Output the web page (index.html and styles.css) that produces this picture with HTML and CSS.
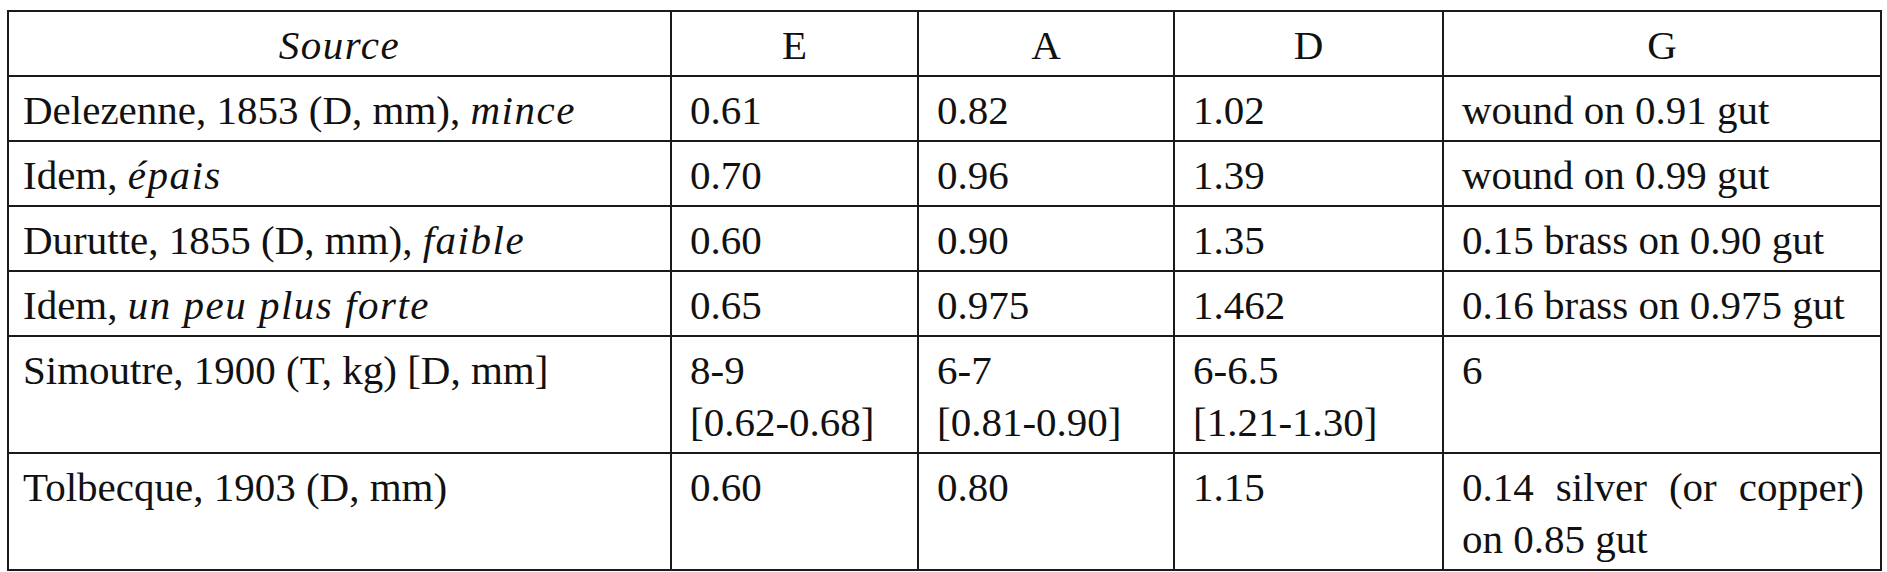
FILE: index.html
```html
<!DOCTYPE html>
<html lang="en">
<head>
    <meta charset="UTF-8">
    <meta name="viewport" content="width=device-width, initial-scale=1.0">
    <title>String gauges</title>
    <link rel="stylesheet" href="styles.css">
</head>
<body>
    <table class="gauges">
        <colgroup>
            <col class="colSource">
            <col class="colE">
            <col class="colA">
            <col class="colD">
            <col class="colG">
        </colgroup>
        <thead>
            <tr>
                <th><i>Source</i></th>
                <th>E</th>
                <th>A</th>
                <th>D</th>
                <th>G</th>
            </tr>
        </thead>
        <tbody>
            <tr>
                <td>Delezenne, 1853 (D, mm), <i>mince</i></td>
                <td>0.61</td>
                <td>0.82</td>
                <td>1.02</td>
                <td>wound on 0.91 gut</td>
            </tr>
            <tr>
                <td>Idem, <i>épais</i></td>
                <td>0.70</td>
                <td>0.96</td>
                <td>1.39</td>
                <td>wound on 0.99 gut</td>
            </tr>
            <tr>
                <td>Durutte, 1855 (D, mm), <i>faible</i></td>
                <td>0.60</td>
                <td>0.90</td>
                <td>1.35</td>
                <td>0.15 brass on 0.90 gut</td>
            </tr>
            <tr>
                <td>Idem, <i>un peu plus forte</i></td>
                <td>0.65</td>
                <td>0.975</td>
                <td>1.462</td>
                <td>0.16 brass on 0.975 gut</td>
            </tr>
            <tr>
                <td>Simoutre, 1900 (T, kg) [D, mm]</td>
                <td>8-9<br>[0.62-0.68]</td>
                <td>6-7<br>[0.81-0.90]</td>
                <td>6-6.5<br>[1.21-1.30]</td>
                <td>6</td>
            </tr>
            <tr>
                <td>Tolbecque, 1903 (D, mm)</td>
                <td>0.60</td>
                <td>0.80</td>
                <td>1.15</td>
                <td class="justify">0.14 silver (or copper) on&nbsp;0.85 gut</td>
            </tr>
        </tbody>
    </table>
</body>
</html>
```

FILE: styles.css
```css
html
{
    background-color: #fff;
}
body
{
    margin: 0;
    padding: 10px 7px 0 7px;
    font-family: "Liberation Serif", "DejaVu Serif", serif;
    color: #111;
}
.gauges
{
    width: 1873px;
    border-collapse: collapse;
    table-layout: fixed;
    font-size: 41px;
    line-height: 52px;
}
.gauges i
{
    letter-spacing: 1.5px;
}
.colSource
{
    width: 663px;
}
.colE
{
    width: 247px;
}
.colA
{
    width: 256px;
}
.colD
{
    width: 269px;
}
.colG
{
    width: 438px;
}
.gauges th, .gauges td
{
    border: 2px solid #1a1a1a;
    padding: 7px 18px 4px 18px;
    vertical-align: top;
    text-align: left;
}
.gauges td:first-child
{
    padding-left: 14px;
}
.gauges th
{
    font-weight: normal;
    text-align: center;
}
.gauges td.justify
{
    text-align: justify;
    padding-right: 16px;
}
```
